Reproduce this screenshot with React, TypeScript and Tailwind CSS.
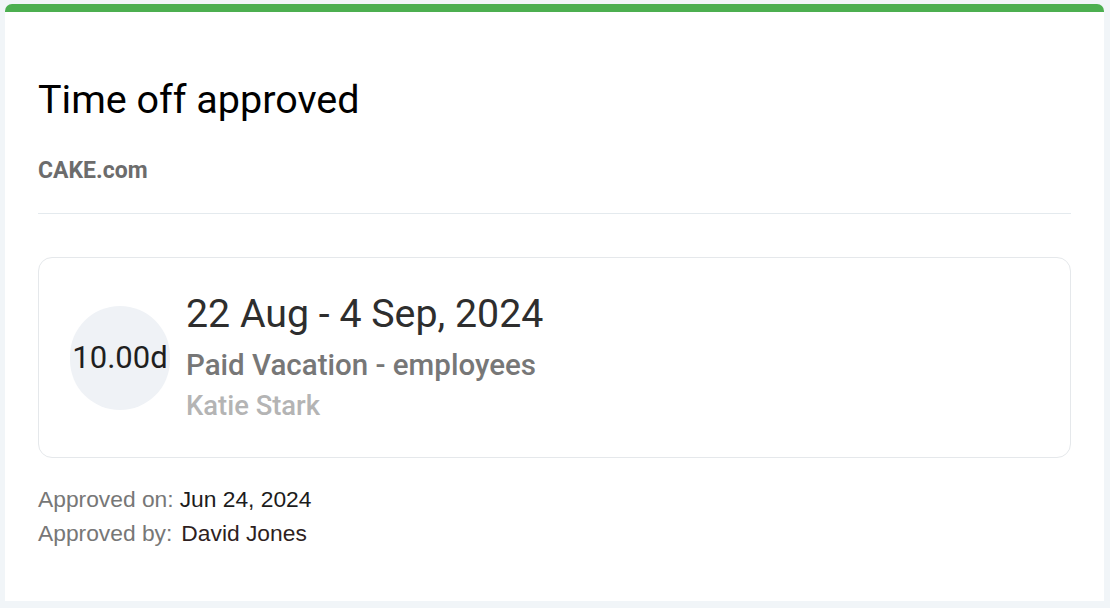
export default function App() {
  return (
    <div className="min-h-[608px] bg-[#f1f5f8] pb-[7px] pl-[5px] pr-[6px] pt-[4px] font-['Roboto',sans-serif]">
      <div className="h-[597px] rounded-t-[7px] border-t-[8px] border-[#4caf50] bg-white px-[33px] pt-[64px]">
        <h1 className="text-[39.5px] leading-[48px] text-black">Time off approved</h1>
        <p className="mt-[33px] text-[23px] font-bold leading-[28px] text-[#6c6c6c]">CAKE.com</p>
        <div className="mt-[28px] h-px bg-[#e4eaee]" />

        <div className="mt-[43px] flex h-[201px] items-center rounded-[14px] border border-[#e5e8eb] pl-[31px]">
          <div className="flex h-[104px] w-[100px] shrink-0 items-center justify-center rounded-full bg-[#eff2f6]">
            <span className="whitespace-nowrap text-[31px] leading-none text-[#1f1f1f]">10.00d</span>
          </div>
          <div className="ml-[16px] flex flex-col">
            <div className="text-[39.3px] leading-[48px] text-[#2e2e2e]">22 Aug - 4 Sep, 2024</div>
            <div className="mt-[7px] text-[29.5px] font-medium leading-[40px] text-[#777777]">
              Paid Vacation - employees
            </div>
            <div className="mt-px text-[27.4px] font-medium leading-[40px] text-[#b4b4b4]">Katie Stark</div>
          </div>
        </div>

        <div className="mt-[24px] font-['Liberation_Sans',Arial,sans-serif] text-[22.8px] leading-[34px]">
          <div className="flex">
            <span className="text-[#777777]">Approved on:</span>
            <span className="ml-[6px] text-[#1c1c1c]">Jun 24, 2024</span>
          </div>
          <div className="flex">
            <span className="text-[#777777]">Approved by:</span>
            <span className="ml-[9px] text-[#2f1f1f]">David Jones</span>
          </div>
        </div>
      </div>
    </div>
  );
}
